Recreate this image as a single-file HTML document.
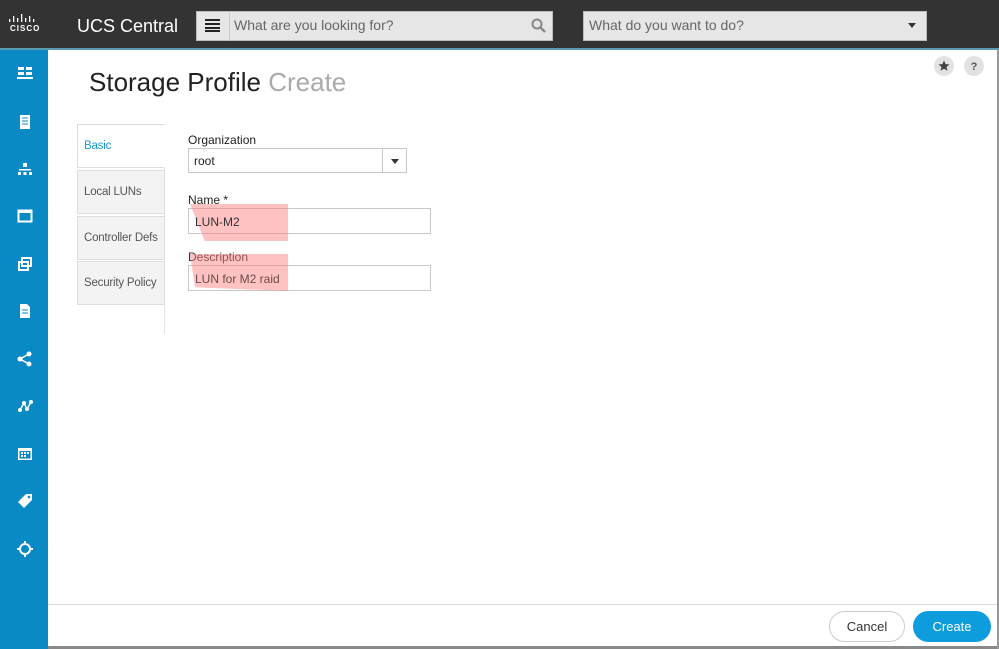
<!DOCTYPE html>
<html><head><meta charset="utf-8"><style>
*{margin:0;padding:0;box-sizing:border-box}
body{width:999px;height:649px;overflow:hidden;background:#fff;font-family:"Liberation Sans",sans-serif;position:relative}
.hdr{position:absolute;left:0;top:0;width:999px;height:48px;background:#333}
.teal{position:absolute;left:0;top:48px;width:999px;height:2px;background:#5a9bb0}
.side{position:absolute;left:0;top:50px;width:48px;height:599px;background:#0a8ac4}
.rb{position:absolute;left:997px;top:50px;width:2px;height:599px;background:#999}
.ic{position:absolute;left:17px;width:16px;height:16px}
.t{position:absolute;white-space:nowrap}
.box{position:absolute;border:1px solid #c8c8c8;background:#fff}
.tab{position:absolute;left:77px;width:88px;height:44px;border:1px solid #ddd;background:#f3f3f3;font-size:11.5px;letter-spacing:-0.2px;color:#555;padding-left:6px;line-height:42px;white-space:nowrap;overflow:hidden}
.hl{position:absolute;background:rgba(255,120,120,.45)}
</style></head><body>
<div class="hdr"></div>
<div class="teal"></div>
<svg style="position:absolute;left:8px;top:14px" width="34" height="10"><g fill="#fff">
<rect x="1" y="5" width="1.3" height="3"/><rect x="5" y="2" width="1.3" height="6"/><rect x="9" y="4" width="1.3" height="4"/><rect x="13" y="0" width="1.3" height="8"/><rect x="17" y="4" width="1.3" height="4"/><rect x="21" y="2" width="1.3" height="6"/><rect x="25" y="5" width="1.3" height="3"/></g></svg>
<div class="t" style="left:10px;top:24px;font-size:8px;color:#fff;font-weight:bold;letter-spacing:1px">CISCO</div>
<div class="t" style="left:77px;top:16px;font-size:18px;color:#fff">UCS Central</div>
<div class="box" style="left:196px;top:11px;width:357px;height:30px;background:#e6e6e6;border-color:#bbb"></div>
<div style="position:absolute;left:229px;top:11px;width:1px;height:30px;background:#ccc"></div>
<svg style="position:absolute;left:205px;top:19px" width="15" height="13"><g fill="#222"><rect y="0" width="15" height="2"/><rect y="4" width="15" height="2"/><rect y="8" width="15" height="2"/><rect y="11" width="15" height="2"/></g></svg>
<div class="t" style="left:234px;top:17px;font-size:14px;color:#666">What are you looking for?</div>
<svg style="position:absolute;left:531px;top:18px" width="15" height="15"><circle cx="6" cy="6" r="4.5" fill="none" stroke="#888" stroke-width="2"/><line x1="9.5" y1="9.5" x2="14" y2="14" stroke="#888" stroke-width="2.5"/></svg>
<div class="box" style="left:583px;top:11px;width:344px;height:30px;background:#e6e6e6;border-color:#bbb"></div>
<div class="t" style="left:589px;top:17px;font-size:14px;color:#666">What do you want to do?</div>
<svg style="position:absolute;left:908px;top:23px" width="8" height="5"><path d="M0 0H8L4 5Z" fill="#333"/></svg>

<div class="side"></div>
<div class="rb"></div>
<svg class="ic" style="top:66px" viewBox="0 0 16 16" fill="#fff"><rect x="1" y="1" width="6" height="3"/><rect x="9" y="1" width="6" height="3"/><rect x="1" y="6" width="6" height="3"/><rect x="9" y="6" width="6" height="3"/><rect x="0" y="11" width="16" height="2"/></svg>
<svg class="ic" style="top:114px" viewBox="0 0 16 16"><rect x="3" y="1" width="10" height="14" fill="#fff"/><path d="M5 4h6M5 7h6M5 10h6" stroke="#0a8ac4"/></svg>
<svg class="ic" style="top:161px" viewBox="0 0 16 16" fill="#fff"><rect x="6" y="2" width="4" height="4"/><rect x="2" y="8" width="12" height="1.5"/><rect x="1" y="11" width="3" height="3"/><rect x="6.5" y="11" width="3" height="3"/><rect x="12" y="11" width="3" height="3"/></svg>
<svg class="ic" style="top:208px" viewBox="0 0 16 16"><rect x="1.5" y="2.5" width="13" height="11" fill="none" stroke="#fff" stroke-width="2"/><rect x="1" y="2" width="14" height="3" fill="#fff"/></svg>
<svg class="ic" style="top:256px" viewBox="0 0 16 16" fill="none" stroke="#fff" stroke-width="2"><rect x="5" y="2" width="9" height="8"/><rect x="2" y="6" width="9" height="8"/></svg>
<svg class="ic" style="top:303px" viewBox="0 0 16 16"><path d="M3 1h7l3 3v11H3Z" fill="#fff"/><path d="M5 7h6M5 10h6" stroke="#0a8ac4"/></svg>
<svg class="ic" style="top:351px" viewBox="0 0 16 16" fill="#fff"><circle cx="12" cy="3" r="2.5"/><circle cx="3" cy="8" r="2.5"/><circle cx="12" cy="13" r="2.5"/><path d="M12 3L3 8L12 13" stroke="#fff" stroke-width="1.5" fill="none"/></svg>
<svg class="ic" style="top:398px" viewBox="0 0 16 16" fill="#fff"><circle cx="3" cy="12" r="2"/><circle cx="7" cy="5" r="2"/><circle cx="10" cy="11" r="2"/><circle cx="14" cy="4" r="2"/><path d="M3 12L7 5L10 11L14 4" stroke="#fff" stroke-width="1.5" fill="none"/></svg>
<svg class="ic" style="top:446px" viewBox="0 0 16 16"><rect x="1" y="2" width="14" height="12" fill="#fff"/><rect x="2.5" y="5" width="11" height="7.5" fill="#0a8ac4"/><g fill="#fff"><rect x="4" y="6" width="2" height="2"/><rect x="7" y="6" width="2" height="2"/><rect x="10" y="6" width="2" height="2"/><rect x="4" y="9" width="2" height="2"/><rect x="7" y="9" width="2" height="2"/></g></svg>
<svg class="ic" style="top:493px" viewBox="0 0 16 16"><path d="M9 1h6v6L7 15L1 9Z" fill="#fff"/><circle cx="12" cy="4" r="1.3" fill="#0a8ac4"/></svg>
<svg class="ic" style="top:541px" viewBox="0 0 16 16" fill="none" stroke="#fff" stroke-width="2"><circle cx="8" cy="8" r="5"/><path d="M8 0v3M8 13v3M0 8h3M13 8h3"/></svg>

<div class="t" style="left:89px;top:67px;font-size:26px;color:#222">Storage Profile <span style="color:#aaa">Create</span></div>
<svg style="position:absolute;left:934px;top:56px" width="20" height="20"><circle cx="10" cy="10" r="10" fill="#e2e2e2"/><path d="M10 4.5l1.6 3.6 3.9.3-3 2.6.9 3.8L10 12.8 6.6 14.8l.9-3.8-3-2.6 3.9-.3Z" fill="#444"/></svg>
<svg style="position:absolute;left:964px;top:56px" width="20" height="20"><circle cx="10" cy="10" r="10" fill="#e2e2e2"/><text x="10" y="14" text-anchor="middle" font-size="11" font-weight="bold" fill="#555" font-family="Liberation Sans">?</text></svg>

<div style="position:absolute;left:164px;top:124px;width:1px;height:210px;background:#e2e2e2"></div>
<div class="tab" style="top:124px;background:#fff;color:#1a9ad6;border-right-color:#fff">Basic</div>
<div class="tab" style="top:170px">Local LUNs</div>
<div class="tab" style="top:216px">Controller Defs</div>
<div class="tab" style="top:261px">Security Policy</div>

<div class="t" style="left:188px;top:133px;font-size:12px;color:#222">Organization</div>
<div class="box" style="left:188px;top:148px;width:219px;height:25px"></div>
<div style="position:absolute;left:382px;top:148px;width:1px;height:25px;background:#c8c8c8"></div>
<div class="t" style="left:194px;top:154px;font-size:12px;color:#222">root</div>
<svg style="position:absolute;left:391px;top:159px" width="8" height="5"><path d="M0 0H8L4 5Z" fill="#333"/></svg>

<div class="t" style="left:188px;top:193px;font-size:12px;color:#222">Name *</div>
<div class="box" style="left:188px;top:208px;width:243px;height:26px"></div>
<div class="hl" style="left:190px;top:204px;width:98px;height:37px;clip-path:polygon(0 0,100% 0,100% 100%,15% 100%)"></div>
<div class="t" style="left:195px;top:215px;font-size:12px;color:#333">LUN-M2</div>

<div class="t" style="left:188px;top:250px;font-size:12px;color:#333">Description</div>
<div class="box" style="left:188px;top:265px;width:243px;height:26px"></div>
<div class="hl" style="left:190px;top:254px;width:98px;height:37px;clip-path:polygon(0 0,100% 0,100% 100%,5% 90%)"></div>
<div class="t" style="left:195px;top:272px;font-size:12px;color:#6a4a4a">LUN for M2 raid</div>

<div style="position:absolute;left:48px;top:604px;width:949px;height:1px;background:#ddd"></div>
<div style="position:absolute;left:829px;top:611px;width:76px;height:31px;border:1px solid #ccc;border-radius:16px;font-size:13px;color:#333;text-align:center;line-height:29px;background:#fff">Cancel</div>
<div style="position:absolute;left:913px;top:611px;width:78px;height:31px;border-radius:16px;font-size:13px;color:#fff;text-align:center;line-height:31px;background:#0d9ddc">Create</div>
<div style="position:absolute;left:48px;top:646px;width:949px;height:3px;background:#888"></div>
</body></html>
